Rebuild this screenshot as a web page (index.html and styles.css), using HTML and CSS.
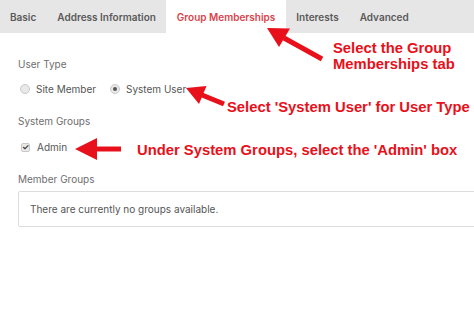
FILE: index.html
```html
<!DOCTYPE html>
<html lang="en">
  <head>
    <meta charset="UTF-8" />
    <title>Group Memberships</title>
    <link rel="stylesheet" href="styles.css">
  </head>
  <body>
    <main class="page">
      <nav class="tabs">
        <span class="tab">Basic</span>
        <span class="tab">Address Information</span>
        <span class="tab active">Group Memberships</span>
        <span class="tab">Interests</span>
        <span class="tab">Advanced</span>
      </nav>

      <section class="form">
        <div class="group">
          <span class="label">User Type</span>
          <div class="options">
            <span class="option"><i class="radio"></i>Site Member</span>
            <span class="option"><i class="radio checked"></i>System User</span>
          </div>
        </div>

        <div class="group">
          <span class="label">System Groups</span>
          <div class="options checks">
            <span class="option"><i class="check">&#10003;</i>Admin</span>
          </div>
        </div>

        <div class="group">
          <span class="label">Member Groups</span>
          <div class="empty">There are currently no groups available.</div>
        </div>
      </section>

      <p class="note note-tab">Select the Group<br>Memberships tab</p>
      <p class="note note-user">Select 'System User' for User Type</p>
      <p class="note note-admin">Under System Groups, select the 'Admin' box</p>

      <svg class="arrows" viewBox="0 0 474 315" width="474" height="315">
        <g fill="#e8101a" stroke="#e8101a">
          <line x1="322" y1="59" x2="284" y2="38" stroke-width="5" />
          <polygon points="267,28 290,28.5 279,47" stroke="none" />
          <line x1="224" y1="104" x2="202" y2="95" stroke-width="5" />
          <polygon points="186,88 206.5,86 199,104" stroke="none" />
          <line x1="121" y1="149" x2="96" y2="149" stroke-width="5" />
          <polygon points="75,149 97,138 97,160" stroke="none" />
        </g>
      </svg>
    </main>
  </body>
</html>
```

FILE: styles.css
```css
:root {
  --tabbar: #e6e6e6;
  --tabtext: #5a5a5a;
  --active: #d9434b;
  --label: #6e6e6e;
  --text: #555555;
  --line: #dddddd;
  --note: #e8101a;
}
* {
  margin: 0;
  padding: 0;
  box-sizing: border-box;
}
body {
  background-color: #ffffff;
  font-family: Inter, "Noto Sans", sans-serif;
}
.page {
  position: relative;
  width: 474px;
  height: 315px;
  overflow: hidden;
}

.tabs {
  display: flex;
  height: 33px;
  background-color: var(--tabbar);
}
.tab {
  display: flex;
  align-items: center;
  padding: 0 10.5px;
  font-size: 10px;
  font-weight: 600;
  color: var(--tabtext);
}
.tab:first-child {
  padding-left: 10px;
}
.tab.active {
  background-color: #ffffff;
  color: var(--active);
}

.form {
  padding: 24px 0 0 18px;
  display: flex;
  flex-direction: column;
  gap: 18px;
}
.group {
  display: flex;
  flex-direction: column;
  gap: 11px;
}
.label {
  font-size: 10px;
  line-height: 14px;
  color: var(--label);
}
.options {
  display: flex;
  gap: 12px;
  font-size: 10px;
  line-height: 14px;
  color: var(--text);
}
.option {
  display: flex;
  align-items: center;
  gap: 6px;
}
.radio {
  width: 10px;
  height: 10px;
  border-radius: 50%;
  border: 1px solid #c9c9c9;
  background-color: #e9e9e9;
  display: flex;
  align-items: center;
  justify-content: center;
  margin-left: 2px;
}
.radio.checked::after {
  content: "";
  width: 4px;
  height: 4px;
  border-radius: 50%;
  background-color: #555555;
}
.checks {
  margin-top: 1px;
}
.check {
  width: 9px;
  height: 9px;
  border-radius: 2px;
  border: 1px solid #c9c9c9;
  background-color: #e9e9e9;
  font-style: normal;
  font-size: 8px;
  line-height: 7px;
  font-weight: 700;
  color: #333333;
  text-align: center;
  margin: 0 1px 0 3px;
}
.group:last-child {
  gap: 5px;
}
.empty {
  height: 36px;
  margin-right: -10px;
  border: 1px solid var(--line);
  border-radius: 2px;
  padding-left: 11px;
  display: flex;
  align-items: center;
  font-size: 10px;
  color: var(--text);
}

.note {
  position: absolute;
  font-family: "Liberation Sans", Arial, sans-serif;
  font-weight: 700;
  font-size: 14.8px;
  line-height: 16px;
  color: var(--note);
  white-space: nowrap;
}
.note-tab {
  left: 333px;
  top: 40px;
}
.note-user {
  left: 227px;
  top: 99px;
}
.note-admin {
  left: 137px;
  top: 142px;
}
.arrows {
  position: absolute;
  left: 0;
  top: 0;
}
```
